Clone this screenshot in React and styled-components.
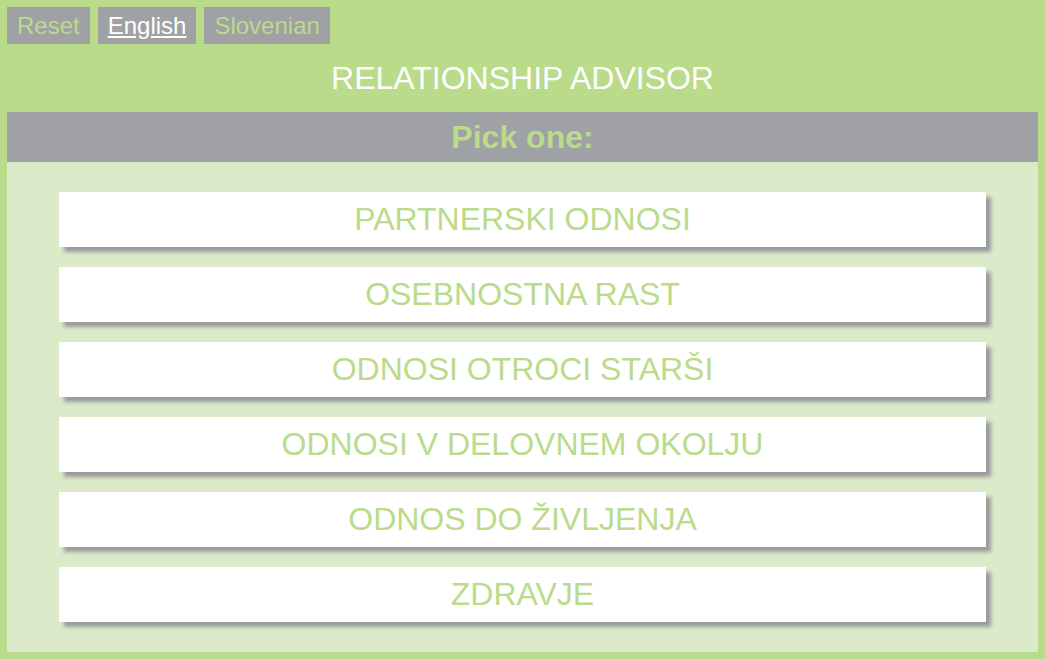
import React from "react";
import styled, { createGlobalStyle } from "styled-components";

const GREEN = "#badb8a";
const GRAY = "#a0a1a5";
const PALE = "#dbebca";

const Global = createGlobalStyle`
  html, body { margin: 0; padding: 0; background: ${GREEN}; }
  body { font-family: "Liberation Sans", Arial, sans-serif; }
`;

const Page = styled.div`
  padding: 7px;
  min-height: 659px;
  box-sizing: border-box;
`;

const Toolbar = styled.div`
  display: flex;
  gap: 8px;
  align-items: flex-start;
`;

const LangButton = styled.button`
  border: none;
  background: ${GRAY};
  color: ${(p) => (p.$active ? "#ffffff" : GREEN)};
  text-decoration: ${(p) => (p.$active ? "underline" : "none")};
  font-family: "Liberation Sans", Arial, sans-serif;
  font-size: 24px;
  height: 37px;
  padding: 0 10px;
  cursor: pointer;
`;

const Title = styled.h1`
  margin: 0;
  height: 68px;
  display: flex;
  align-items: center;
  justify-content: center;
  color: #ffffff;
  font-weight: normal;
  font-size: 32px;
`;

const Header = styled.div`
  background: ${GRAY};
  color: ${GREEN};
  height: 50px;
  display: flex;
  align-items: center;
  justify-content: center;
  font-weight: bold;
  font-size: 32px;
`;

const Panel = styled.div`
  background: ${PALE};
  padding: 30px 0;
  display: flex;
  flex-direction: column;
  align-items: center;
  gap: 20px;
`;

const Choice = styled.button`
  width: 90%;
  height: 55px;
  border: none;
  background: #ffffff;
  color: ${GREEN};
  font-family: "Liberation Sans", Arial, sans-serif;
  font-size: 32px;
  box-shadow: 5px 5px 4px #9a9a9a;
  cursor: pointer;
`;

const choices = [
  "PARTNERSKI ODNOSI",
  "OSEBNOSTNA RAST",
  "ODNOSI OTROCI STARŠI",
  "ODNOSI V DELOVNEM OKOLJU",
  "ODNOS DO ŽIVLJENJA",
  "ZDRAVJE",
];

export default function App() {
  return (
    <>
      <Global />
      <Page>
        <Toolbar>
          <LangButton>Reset</LangButton>
          <LangButton $active>English</LangButton>
          <LangButton>Slovenian</LangButton>
        </Toolbar>
        <Title>RELATIONSHIP ADVISOR</Title>
        <Header>Pick one:</Header>
        <Panel>
          {choices.map((c) => (
            <Choice key={c}>{c}</Choice>
          ))}
        </Panel>
      </Page>
    </>
  );
}
